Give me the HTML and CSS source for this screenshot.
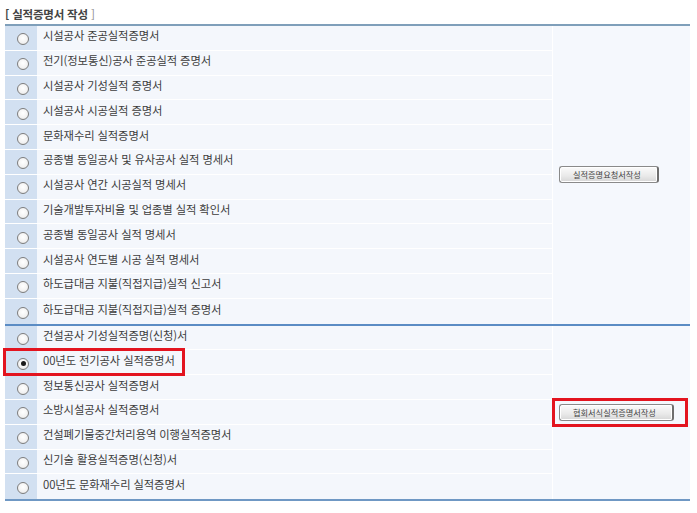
FILE: index.html
```html
<!DOCTYPE html>
<html lang="ko">
<head>
<meta charset="utf-8">
<title>실적증명서 작성</title>
<link rel="stylesheet" href="styles.css">
</head>
<body>
<div class="page">
  <div class="title">[ 실적증명서 작성 <span class="close">]</span></div>
  <div class="board">
    <div class="group">
      <div class="rows">
        <label class="row"><span class="rcell"><input type="radio" name="cert" class="radio"></span><span class="label">시설공사 준공실적증명서</span></label>
        <label class="row"><span class="rcell"><input type="radio" name="cert" class="radio"></span><span class="label">전기(정보통신)공사 준공실적 증명서</span></label>
        <label class="row"><span class="rcell"><input type="radio" name="cert" class="radio"></span><span class="label">시설공사 기성실적 증명서</span></label>
        <label class="row"><span class="rcell"><input type="radio" name="cert" class="radio"></span><span class="label">시설공사 시공실적 증명서</span></label>
        <label class="row"><span class="rcell"><input type="radio" name="cert" class="radio"></span><span class="label">문화재수리 실적증명서</span></label>
        <label class="row"><span class="rcell"><input type="radio" name="cert" class="radio"></span><span class="label">공종별 동일공사 및 유사공사 실적 명세서</span></label>
        <label class="row"><span class="rcell"><input type="radio" name="cert" class="radio"></span><span class="label">시설공사 연간 시공실적 명세서</span></label>
        <label class="row"><span class="rcell"><input type="radio" name="cert" class="radio"></span><span class="label">기술개발투자비율 및 업종별 실적 확인서</span></label>
        <label class="row"><span class="rcell"><input type="radio" name="cert" class="radio"></span><span class="label">공종별 동일공사 실적 명세서</span></label>
        <label class="row"><span class="rcell"><input type="radio" name="cert" class="radio"></span><span class="label">시설공사 연도별 시공 실적 명세서</span></label>
        <label class="row"><span class="rcell"><input type="radio" name="cert" class="radio"></span><span class="label">하도급대금 지불(직접지급)실적 신고서</span></label>
        <label class="row"><span class="rcell"><input type="radio" name="cert" class="radio"></span><span class="label">하도급대금 지불(직접지급)실적 증명서</span></label>
      </div>
      <div class="side">
        <span class="btn-wrap"><button type="button" class="btn">실적증명요청서작성</button></span>
      </div>
    </div>
    <div class="group second">
      <div class="rows">
        <label class="row"><span class="rcell"><input type="radio" name="cert" class="radio"></span><span class="label">건설공사 기성실적증명(신청)서</span></label>
        <label class="row marked"><span class="rcell"><input type="radio" name="cert" class="radio" checked></span><span class="label">00년도 전기공사 실적증명서</span></label>
        <label class="row"><span class="rcell"><input type="radio" name="cert" class="radio"></span><span class="label">정보통신공사 실적증명서</span></label>
        <label class="row"><span class="rcell"><input type="radio" name="cert" class="radio"></span><span class="label">소방시설공사 실적증명서</span></label>
        <label class="row"><span class="rcell"><input type="radio" name="cert" class="radio"></span><span class="label">건설폐기물중간처리용역 이행실적증명서</span></label>
        <label class="row"><span class="rcell"><input type="radio" name="cert" class="radio"></span><span class="label">신기술 활용실적증명(신청)서</span></label>
        <label class="row"><span class="rcell"><input type="radio" name="cert" class="radio"></span><span class="label">00년도 문화재수리 실적증명서</span></label>
      </div>
      <div class="side">
        <span class="btn-wrap marked"><button type="button" class="btn">협회서식실적증명서작성</button></span>
      </div>
    </div>
  </div>
</div>
</body>
</html>
```

FILE: styles.css
```css
*, *::before, *::after { box-sizing: border-box; }
html, body { margin: 0; padding: 0; background: #ffffff; }
body {
  font-family: "Noto Sans CJK KR", "Noto Sans", sans-serif;
  color: #3d3d3d;
}
.page {
  width: 697px;
  padding-left: 5px;
}
.title {
  height: 24px;
  padding-top: 6px;
  line-height: 16px;
  font-size: 11.5px;
  font-weight: bold;
  color: #444444;
  letter-spacing: -0.2px;
}
.title .close {
  font-weight: normal;
  color: #8a8a8a;
}
.board {
  width: 685px;
  border-top: 2px solid #7f9fba;
  border-bottom: 2px solid #6f98c4;
}
.group {
  display: flex;
}
.group.second {
  border-top: 2px solid #5b8cc4;
}
.rows {
  flex: 0 0 547px;
  display: flex;
  flex-direction: column;
}
.row {
  position: relative;
  display: flex;
  flex: 0 0 24.8px;
  height: 24.8px;
  border-bottom: 1px solid #ffffff;
}
.row:last-child { border-bottom: none; }
.rcell {
  flex: 0 0 32px;
  background: #d2e0f1;
  display: flex;
  align-items: center;
  padding-left: 12px;
  padding-top: 3px;
}
.radio {
  appearance: none;
  -webkit-appearance: none;
  margin: 0;
  width: 12px;
  height: 12px;
  border-radius: 50%;
  border: 1px solid #7d7d7d;
  background: radial-gradient(circle at 50% 40%, #ffffff 0%, #f2f2f2 60%, #d9d9d9 100%);
  position: relative;
}
.radio:checked::after {
  content: "";
  position: absolute;
  left: 2.5px;
  top: 2.5px;
  width: 5px;
  height: 5px;
  border-radius: 50%;
  background: #1a1a1a;
}
.label {
  flex: 1;
  background: #f4f7fc;
  display: flex;
  align-items: center;
  padding-left: 6px;
  padding-bottom: 5px;
  font-size: 11.3px;
  line-height: 14px;
  letter-spacing: -0.1px;
  white-space: nowrap;
}
.row.marked { z-index: 2; }
.row.marked::after {
  content: "";
  position: absolute;
  left: -2px;
  top: -2px;
  width: 182px;
  height: 28px;
  border: 3px solid #e3141f;
  pointer-events: none;
}
.side {
  flex: 1;
  background: #f5f8fd;
  border-left: 1px solid #ffffff;
  display: flex;
  align-items: center;
  padding-left: 6px;
}
.btn-wrap {
  position: relative;
  display: inline-block;
}
.btn-wrap.marked::after {
  content: "";
  position: absolute;
  left: -7px;
  top: -6px;
  right: -14px;
  bottom: -6px;
  border: 3px solid #e3141f;
  pointer-events: none;
}
.btn {
  display: block;
  height: 17px;
  margin: 0;
  padding: 0 16px 0 13px;
  border: 1px solid #8a8a8a;
  border-right: 2px solid #6e6e6e;
  border-radius: 3px;
  background: linear-gradient(#fbfbfb, #e9e9e9 60%, #d6d6d6);
  box-shadow: inset 0 0 0 1px #ffffff;
  font-family: "Noto Sans CJK KR", sans-serif;
  font-size: 8.2px;
  line-height: 15px;
  color: #444444;
  white-space: nowrap;
}
```
